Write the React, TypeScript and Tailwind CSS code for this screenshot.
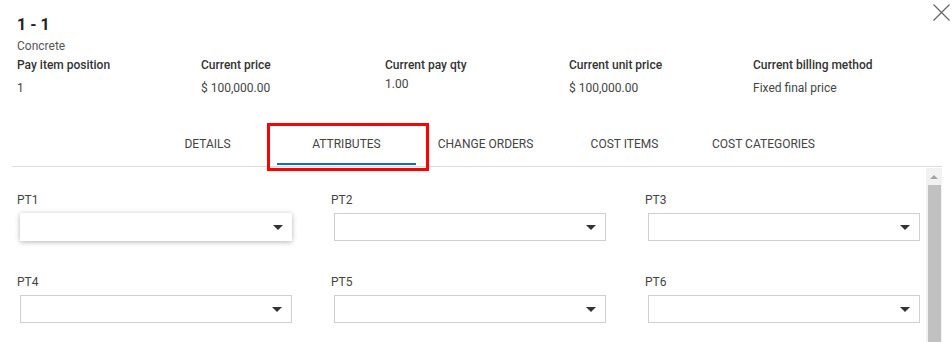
import React from "react";

const summary = [
  { label: "Pay item position", value: "1", shift: false },
  { label: "Current price", value: "$ 100,000.00", shift: false },
  { label: "Current pay qty", value: "1.00", shift: true },
  { label: "Current unit price", value: "$ 100,000.00", shift: false },
  { label: "Current billing method", value: "Fixed final price", shift: false },
];

const tabs = ["DETAILS", "ATTRIBUTES", "CHANGE ORDERS", "COST ITEMS", "COST CATEGORIES"];

function Caret() {
  return (
    <svg width="10" height="5" viewBox="0 0 10 5" className="shrink-0">
      <path d="M0 0 L10 0 L5 5 Z" fill="#333" />
    </svg>
  );
}

function SelectField({ label, focused }: { label: string; focused?: boolean }) {
  return (
    <div className="w-[314px] shrink-0 pl-[5px]">
      <div className="text-[12px] leading-[16px] text-[#444]">{label}</div>
      <div
        className={
          focused
            ? "mt-[5px] ml-[3px] w-[272px] h-[28px] bg-white flex items-center justify-end pr-[9px] shadow-[0_1px_5px_rgba(0,0,0,0.3)]"
            : "mt-[5px] ml-[3px] w-[272px] h-[28px] bg-white flex items-center justify-end pr-[9px] border border-[#cfcfcf]"
        }
      >
        <Caret />
      </div>
    </div>
  );
}

export default function App() {
  return (
    <div
      className="relative w-[952px] h-[342px] overflow-hidden bg-white text-[#333]"
      style={{ fontFamily: "Roboto, 'Liberation Sans', sans-serif" }}
    >
      {/* Close */}
      <svg className="absolute left-[933px] top-[4px]" width="17" height="17" viewBox="0 0 17 17">
        <path d="M0.5 0.5 L16.5 16.5 M16.5 0.5 L0.5 16.5" stroke="#666" strokeWidth="1.2" fill="none" />
      </svg>

      {/* Header */}
      <div className="pl-[17px] pt-[15px]">
        <div className="text-[16px] leading-[20px] font-bold text-[#222]">1 - 1</div>
        <div className="mt-[3px] text-[12px] leading-[16px] text-[#555]">Concrete</div>
        <div className="mt-[3px] flex">
          {summary.map((s) => (
            <div key={s.label} className="w-[184px]">
              <div className="text-[12px] leading-[16px] font-medium text-[#333]">{s.label}</div>
              <div
                className={
                  s.shift
                    ? "mt-[3px] text-[12px] leading-[16px] text-[#444]"
                    : "mt-[7px] text-[12px] leading-[16px] text-[#444]"
                }
              >
                {s.value}
              </div>
            </div>
          ))}
        </div>
      </div>

      {/* Tabs */}
      <div className="mx-[12px] mt-[28px] w-[930px]">
        <div className="flex pl-[126px]">
          {tabs.map((t, i) => (
            <div
              key={t}
              className={
                i === 1
                  ? "w-[139px] h-[41px] flex items-center justify-center text-[12px] text-[#444] border-b-2 border-[#1a66c9]"
                  : "w-[139px] h-[41px] flex items-center justify-center text-[12px] text-[#444] border-b-2 border-transparent"
              }
            >
              {t}
            </div>
          ))}
        </div>
        <div className="mt-px h-px bg-[#dddddd]" />
      </div>

      {/* Highlight annotation */}
      <div className="absolute left-[267px] top-[123px] w-[162px] h-[48px] border-[3px] border-[#ff0000]" />

      {/* Content */}
      <div className="flex ml-[12px]">
        <div className="w-[914px]">
          <div className="flex mt-[25px]">
            <SelectField label="PT1" focused />
            <SelectField label="PT2" />
            <SelectField label="PT3" />
          </div>
          <div className="flex mt-[33px]">
            <SelectField label="PT4" />
            <SelectField label="PT5" />
            <SelectField label="PT6" />
          </div>
        </div>
        <div className="mt-[1px] w-[16px] h-[200px] bg-[#f1f1f1] flex flex-col items-center">
          <svg className="mt-[7px]" width="8" height="4" viewBox="0 0 8 4">
            <path d="M0 4 L8 4 L4 0 Z" fill="#a3a3a3" />
          </svg>
          <div className="mt-[6px] w-[13px] flex-1 bg-[#c1c1c1]" />
        </div>
      </div>
    </div>
  );
}
